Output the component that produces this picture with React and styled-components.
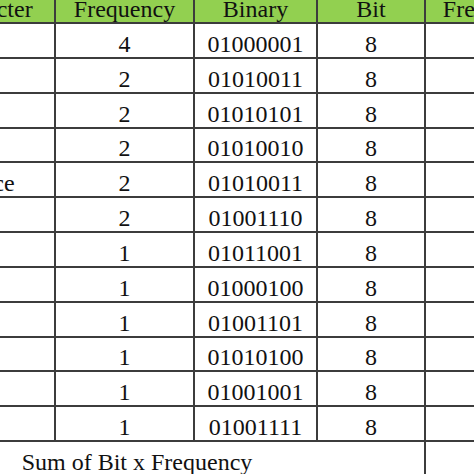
import React from 'react';
import styled, { createGlobalStyle } from 'styled-components';

const rows = [
  { ch: 'A', freq: 4, bin: '01000001' },
  { ch: 'S', freq: 2, bin: '01010011' },
  { ch: 'U', freq: 2, bin: '01010101' },
  { ch: 'R', freq: 2, bin: '01010010' },
  { ch: 'Space', freq: 2, bin: '01010011' },
  { ch: 'N', freq: 2, bin: '01001110' },
  { ch: 'Y', freq: 1, bin: '01011001' },
  { ch: 'D', freq: 1, bin: '01000100' },
  { ch: 'M', freq: 1, bin: '01001101' },
  { ch: 'T', freq: 1, bin: '01010100' },
  { ch: 'I', freq: 1, bin: '01001001' },
  { ch: 'O', freq: 1, bin: '01001111' },
];

const App = () => {
  return (
    <>
      <GlobalStyle />
      <Viewport>
        <Table>
          <colgroup>
            <col style={{ width: 68 }} />
            <col style={{ width: 138 }} />
            <col style={{ width: 139 }} />
            <col style={{ width: 123 }} />
            <col style={{ width: 108 }} />
            <col style={{ width: 137 }} />
          </colgroup>
          <thead>
            <HeadRow>
              <HeadCell>No</HeadCell>
              <HeadCell>Character</HeadCell>
              <HeadCell>Frequency</HeadCell>
              <HeadCell>Binary</HeadCell>
              <HeadCell>Bit</HeadCell>
              <HeadCell>Frequency</HeadCell>
            </HeadRow>
          </thead>
          <tbody>
            {rows.map((r, i) => (
              <Row key={i}>
                <Cell>{i + 1}</Cell>
                <Cell>{r.ch}</Cell>
                <Cell>{r.freq}</Cell>
                <Cell>{r.bin}</Cell>
                <Cell>8</Cell>
                <Cell>{r.freq * 8}</Cell>
              </Row>
            ))}
            <Row>
              <FootCell colSpan={5}>Sum of Bit x Frequency</FootCell>
              <FootCell>144</FootCell>
            </Row>
          </tbody>
        </Table>
      </Viewport>
    </>
  );
};

export default App;

const GlobalStyle = createGlobalStyle`
  html, body {
    margin: 0;
    padding: 0;
    background: #ffffff;
    overflow: hidden;
  }
`;

const Viewport = styled.div`
  width: 474px;
  height: 474px;
  overflow: hidden;
  background: #ffffff;
`;

const Table = styled.table`
  border-collapse: collapse;
  table-layout: fixed;
  width: 713px;
  margin-left: -152px;
  margin-top: -13px;
  font-family: "Liberation Serif", "Times New Roman", serif;
  font-size: 24px;
  line-height: 24px;
  color: #111111;
`;

const HeadRow = styled.tr`
  height: 35px;
  background: #92d050;
`;

const Row = styled.tr`
  height: 34.85px;
`;

const HeadCell = styled.th`
  font-weight: normal;
  border: 2px solid #3c3c3c;
  padding: 0 0 1px 0;
  text-align: center;
  vertical-align: bottom;
  white-space: nowrap;
  overflow: hidden;
`;

const Cell = styled.td`
  border: 2px solid #3c3c3c;
  padding: 0 0 1px 0;
  text-align: center;
  vertical-align: bottom;
  white-space: nowrap;
`;

const FootCell = styled(Cell)`
  height: 40px;
  vertical-align: middle;
  padding: 0;
`;
